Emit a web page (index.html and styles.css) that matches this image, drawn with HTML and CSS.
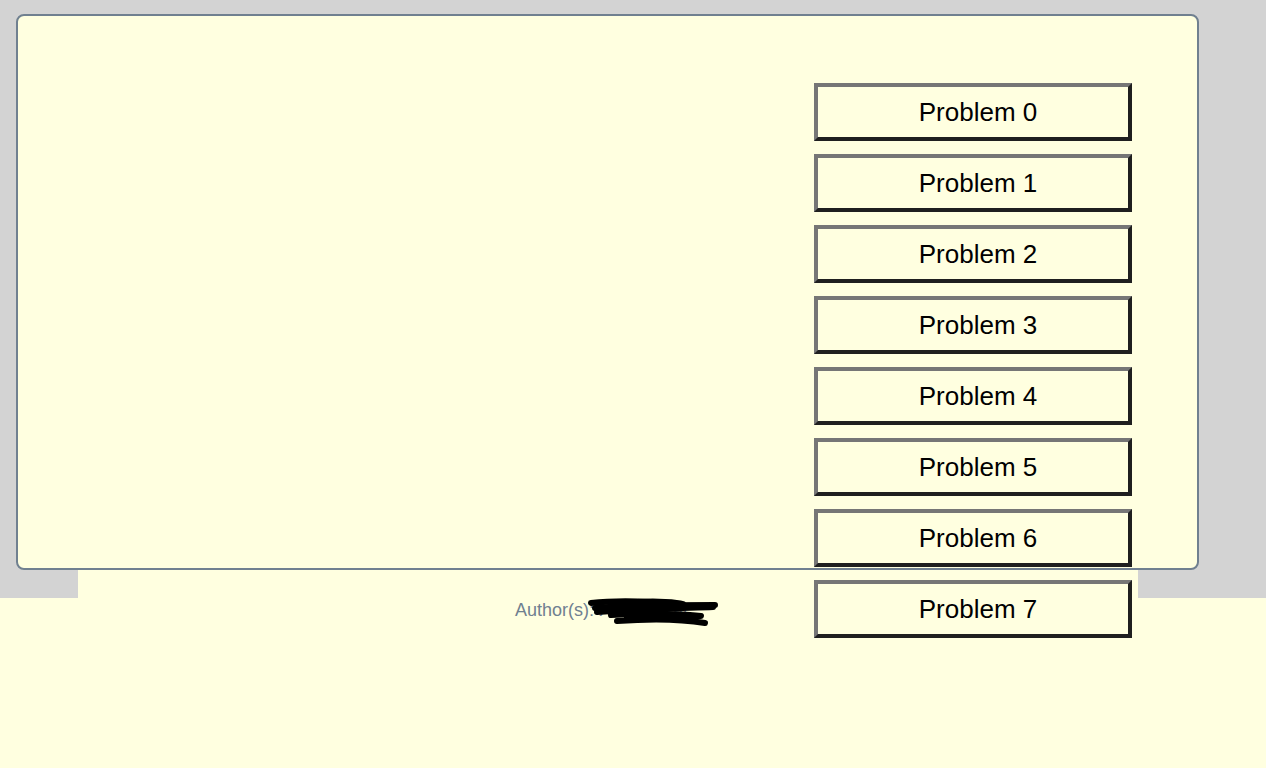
FILE: index.html
```html
<!DOCTYPE html>
<html lang="en">
<head>
<meta charset="utf-8">
<title>Problems</title>
<link rel="stylesheet" href="styles.css">
</head>
<body>
<div class="top">
  <div class="card">
    <div class="problems">
      <button class="problem">Problem 0</button>
      <button class="problem">Problem 1</button>
      <button class="problem">Problem 2</button>
      <button class="problem">Problem 3</button>
      <button class="problem">Problem 4</button>
      <button class="problem">Problem 5</button>
      <button class="problem">Problem 6</button>
      <button class="problem">Problem 7</button>
    </div>
  </div>
  <div class="strip"></div>
</div>
<footer class="footer">
  <span class="author">Author(s): <span class="name">Xxxxx Xxar</span>
    <svg class="scribble" width="140" height="34" viewBox="0 0 140 34">
      <path d="M4 6 C30 3 60 4 92 7" />
      <path d="M8 11 C40 8 90 8 128 8" />
      <path d="M10 15 C50 12 100 11 126 10" />
      <path d="M24 18 C60 16 95 17 114 19 L40 21" />
      <path d="M30 24 C70 21 100 23 118 26" />
      <path d="M50 5 C70 4 90 5 96 7 L60 13" />
    </svg>
  </span>
</footer>
</body>
</html>
```

FILE: styles.css
```css
html {
  background: #ffffe0;
  min-height: 100%;
}
body {
  margin: 0;
  min-height: 768px;
  font-family: "Liberation Sans", Arial, sans-serif;
}
.top {
  background: #d3d3d3;
  padding-top: 14px;
  height: 598px;
  box-sizing: border-box;
}
.card {
  margin: 0 67px 0 16px;
  height: 556px;
  box-sizing: border-box;
  background: #ffffe0;
  border: 2px solid #708090;
  border-radius: 8px;
  padding: 67px 65px 0 0;
  display: flex;
  justify-content: flex-end;
  align-items: flex-start;
}
.problems {
  position: relative;
  z-index: 1;
  display: flex;
  flex-direction: column;
  gap: 13px;
  flex-shrink: 0;
}
.problem {
  flex-shrink: 0;
  width: 318px;
  height: 58px;
  box-sizing: border-box;
  background: #ffffe0;
  border: 4px solid;
  border-color: #767676 #1f1f1f #1f1f1f #767676;
  font-family: "Liberation Sans", Arial, sans-serif;
  font-size: 26px;
  color: #000;
  padding: 0 0 0 10px;
  margin: 0;
  text-align: center;
  cursor: pointer;
}
.strip {
  margin: 0 128px 0 78px;
  height: 28px;
  background: #ffffe0;
}
.footer {
  margin: 0 140px 0 78px;
  padding-top: 1px;
  text-align: center;
}
.author {
  position: relative;
  display: inline-block;
  font-size: 18px;
  line-height: 22px;
  color: #708090;
}
.scribble {
  position: absolute;
  left: 72px;
  top: -2px;
  fill: none;
  stroke: #000;
  stroke-width: 6;
  stroke-linecap: round;
  stroke-linejoin: round;
}
```
